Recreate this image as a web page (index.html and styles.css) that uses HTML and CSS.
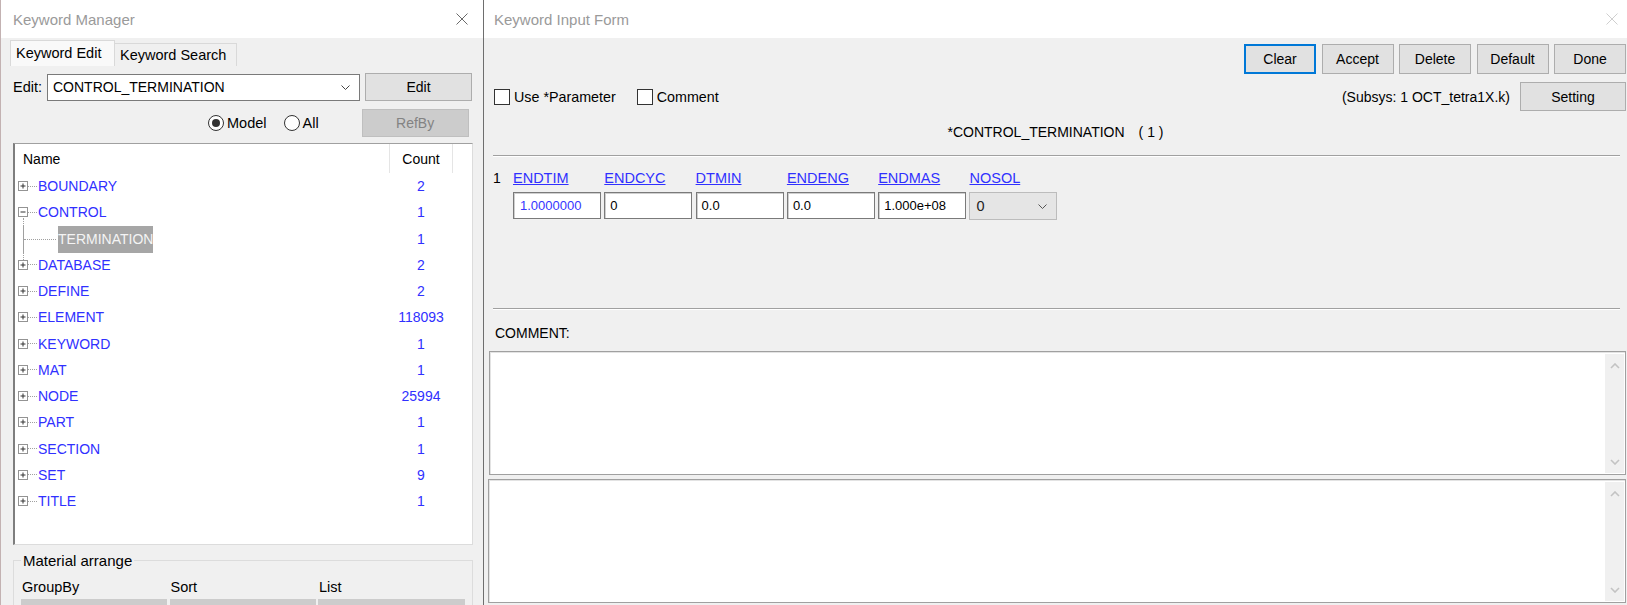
FILE: index.html
```html
<!DOCTYPE html>
<html>
<head>
<meta charset="utf-8">
<title>Keyword Manager</title>
<link rel="stylesheet" href="styles.css">
</head>
<body>
<div class="screen">
  <section class="win win-left">
    <header class="titlebar">
      <span class="title">Keyword Manager</span>
      <svg class="close dark" width="12" height="12" viewBox="0 0 12 12"><path d="M0.5 0.5L11.5 11.5M11.5 0.5L0.5 11.5"/></svg>
    </header>
    <div class="win-body">
      <div class="tabs">
        <div class="tab active">Keyword Edit</div>
        <div class="tab">Keyword Search</div>
      </div>
      <div class="edit-row">
        <span class="edit-lbl">Edit:</span>
        <div class="combo">
          <span class="combo-text">CONTROL_TERMINATION</span>
          <svg class="chev" width="9" height="5" viewBox="0 0 9 5"><path d="M0.5 0.5L4.5 4.5L8.5 0.5"/></svg>
        </div>
        <button class="btn btn-side">Edit</button>
      </div>
      <div class="radio-row">
        <span class="radio checked"></span><span class="radio-lbl">Model</span>
        <span class="radio radio-all"></span><span class="radio-lbl">All</span>
        <button class="btn btn-side disabled">RefBy</button>
      </div>
      <div class="listbox">
        <div class="list-head">
          <div class="head-name">Name</div>
          <div class="head-count">Count</div>
          <div class="head-rest"></div>
        </div>
        <div class="tree">
          <div class="row"><div class="cell-name"><svg class="tog" width="10" height="10" viewBox="0 0 10 10"><rect x="0.5" y="0.5" width="9" height="9"/><path d="M2.5 5H7.5M5 2.5V7.5"/></svg><span class="dots"></span><span class="nm">BOUNDARY</span></div><div class="cnt">2</div></div>
          <div class="row"><div class="cell-name"><svg class="tog" width="10" height="10" viewBox="0 0 10 10"><rect x="0.5" y="0.5" width="9" height="9"/><path d="M2.5 5H7.5"/></svg><span class="dots"></span><span class="nm">CONTROL</span></div><div class="cnt">1</div></div>
          <div class="row child"><div class="cell-name"><span class="branch"></span><span class="nm sel">TERMINATION</span></div><div class="cnt">1</div></div>
          <div class="row"><div class="cell-name"><svg class="tog" width="10" height="10" viewBox="0 0 10 10"><rect x="0.5" y="0.5" width="9" height="9"/><path d="M2.5 5H7.5M5 2.5V7.5"/></svg><span class="dots"></span><span class="nm">DATABASE</span></div><div class="cnt">2</div></div>
          <div class="row"><div class="cell-name"><svg class="tog" width="10" height="10" viewBox="0 0 10 10"><rect x="0.5" y="0.5" width="9" height="9"/><path d="M2.5 5H7.5M5 2.5V7.5"/></svg><span class="dots"></span><span class="nm">DEFINE</span></div><div class="cnt">2</div></div>
          <div class="row"><div class="cell-name"><svg class="tog" width="10" height="10" viewBox="0 0 10 10"><rect x="0.5" y="0.5" width="9" height="9"/><path d="M2.5 5H7.5M5 2.5V7.5"/></svg><span class="dots"></span><span class="nm">ELEMENT</span></div><div class="cnt">118093</div></div>
          <div class="row"><div class="cell-name"><svg class="tog" width="10" height="10" viewBox="0 0 10 10"><rect x="0.5" y="0.5" width="9" height="9"/><path d="M2.5 5H7.5M5 2.5V7.5"/></svg><span class="dots"></span><span class="nm">KEYWORD</span></div><div class="cnt">1</div></div>
          <div class="row"><div class="cell-name"><svg class="tog" width="10" height="10" viewBox="0 0 10 10"><rect x="0.5" y="0.5" width="9" height="9"/><path d="M2.5 5H7.5M5 2.5V7.5"/></svg><span class="dots"></span><span class="nm">MAT</span></div><div class="cnt">1</div></div>
          <div class="row"><div class="cell-name"><svg class="tog" width="10" height="10" viewBox="0 0 10 10"><rect x="0.5" y="0.5" width="9" height="9"/><path d="M2.5 5H7.5M5 2.5V7.5"/></svg><span class="dots"></span><span class="nm">NODE</span></div><div class="cnt">25994</div></div>
          <div class="row"><div class="cell-name"><svg class="tog" width="10" height="10" viewBox="0 0 10 10"><rect x="0.5" y="0.5" width="9" height="9"/><path d="M2.5 5H7.5M5 2.5V7.5"/></svg><span class="dots"></span><span class="nm">PART</span></div><div class="cnt">1</div></div>
          <div class="row"><div class="cell-name"><svg class="tog" width="10" height="10" viewBox="0 0 10 10"><rect x="0.5" y="0.5" width="9" height="9"/><path d="M2.5 5H7.5M5 2.5V7.5"/></svg><span class="dots"></span><span class="nm">SECTION</span></div><div class="cnt">1</div></div>
          <div class="row"><div class="cell-name"><svg class="tog" width="10" height="10" viewBox="0 0 10 10"><rect x="0.5" y="0.5" width="9" height="9"/><path d="M2.5 5H7.5M5 2.5V7.5"/></svg><span class="dots"></span><span class="nm">SET</span></div><div class="cnt">9</div></div>
          <div class="row"><div class="cell-name"><svg class="tog" width="10" height="10" viewBox="0 0 10 10"><rect x="0.5" y="0.5" width="9" height="9"/><path d="M2.5 5H7.5M5 2.5V7.5"/></svg><span class="dots"></span><span class="nm">TITLE</span></div><div class="cnt">1</div></div>
        </div>
      </div>
      <fieldset class="group">
        <legend>Material arrange</legend>
        <div class="group-grid">
          <span class="g-lbl">GroupBy</span><span class="g-lbl">Sort</span><span class="g-lbl">List</span>
          <div class="g-block"></div><div class="g-block"></div><div class="g-block"></div>
        </div>
      </fieldset>
    </div>
  </section>

  <section class="win win-right">
    <header class="titlebar titlebar-right">
      <span class="title">Keyword Input Form</span>
      <svg class="close light" width="12" height="12" viewBox="0 0 12 12"><path d="M0.5 0.5L11.5 11.5M11.5 0.5L0.5 11.5"/></svg>
    </header>
    <div class="form-body">
      <div class="btn-row">
        <button class="btn btn-act focus">Clear</button>
        <button class="btn btn-act">Accept</button>
        <button class="btn btn-act">Delete</button>
        <button class="btn btn-act">Default</button>
        <button class="btn btn-act">Done</button>
      </div>
      <div class="opt-row">
        <span class="check"></span><span class="check-lbl">Use *Parameter</span>
        <span class="check"></span><span class="check-lbl">Comment</span>
        <span class="subsys">(Subsys: 1 OCT_tetra1X.k)</span>
        <button class="btn btn-setting">Setting</button>
      </div>
      <div class="kw-title">*CONTROL_TERMINATION<span class="kw-count">( 1 )</span></div>
      <div class="sep"></div>
      <div class="fields">
        <span class="rownum">1</span>
        <span class="flabel">ENDTIM</span>
        <span class="flabel">ENDCYC</span>
        <span class="flabel">DTMIN</span>
        <span class="flabel">ENDENG</span>
        <span class="flabel">ENDMAS</span>
        <span class="flabel">NOSOL</span>
        <div class="finput blue">1.0000000</div>
        <div class="finput">0</div>
        <div class="finput">0.0</div>
        <div class="finput">0.0</div>
        <div class="finput">1.000e+08</div>
        <div class="fselect"><span>0</span><svg class="chev" width="9" height="5" viewBox="0 0 9 5"><path d="M0.5 0.5L4.5 4.5L8.5 0.5"/></svg></div>
      </div>
      <div class="sep sep2"></div>
      <div class="comment-lbl">COMMENT:</div>
      <div class="tarea">
        <div class="tarea-text"></div>
        <div class="vscroll">
          <svg width="10" height="6" viewBox="0 0 10 6"><path d="M1 5L5 1L9 5"/></svg>
          <svg width="10" height="6" viewBox="0 0 10 6"><path d="M1 1L5 5L9 1"/></svg>
        </div>
      </div>
      <div class="tarea tarea2">
        <div class="tarea-text"></div>
        <div class="vscroll">
          <svg width="10" height="6" viewBox="0 0 10 6"><path d="M1 5L5 1L9 5"/></svg>
          <svg width="10" height="6" viewBox="0 0 10 6"><path d="M1 1L5 5L9 1"/></svg>
        </div>
      </div>
    </div>
  </section>
</div>
</body>
</html>
```

FILE: styles.css
```css
* { box-sizing: border-box; }
html, body { margin: 0; padding: 0; }
body {
  background: #f0f0f0;
  font-family: "Liberation Sans", Arial, sans-serif;
  font-size: 14px;
  color: #000;
}
.screen {
  display: flex;
  width: 1627px;
  height: 605px;
  overflow: hidden;
}
.win {
  display: flex;
  flex-direction: column;
  background: #f0f0f0;
  overflow: hidden;
}
.win-left {
  width: 483px;
  flex: none;
  border-left: 1px solid #c3b2b2;
}
.win-right {
  flex: 1;
  border-left: 1px solid #6e6e6e;
}
.titlebar {
  height: 38px;
  flex: none;
  background: #fff;
  display: flex;
  align-items: center;
  justify-content: space-between;
  padding: 0 15px 0 12px;
  font-size: 15px;
  color: #9a9a9a;
}
.titlebar-right { padding: 0 9px 0 10px; }
.close path { fill: none; stroke-width: 1; }
.close.dark path { stroke: #6a6a6a; }
.close.light path { stroke: #cfcfcf; }

.win-body { flex: 1; display: flex; flex-direction: column; }

/* tabs */
.tabs {
  margin-top: 2px;
  padding-left: 9px;
  height: 26px;
  display: flex;
  align-items: flex-end;
}
.tab {
  height: 23px;
  padding: 0 5px;
  display: flex;
  align-items: center;
  background: #f0f0f0;
  border: 1px solid #d9d9d9;
  border-bottom: none;
  font-size: 14.5px;
}
.tab.active {
  height: 26px;
  width: 105px;
  background: #f9f9f9;
  padding-bottom: 2px;
}
.tab + .tab { margin-left: -1px; width: 123px; }

/* edit row */
.edit-row {
  margin-top: 7px;
  height: 28px;
  display: flex;
  align-items: center;
  padding-left: 12px;
}
.edit-lbl { width: 34px; font-size: 14.5px; }
.combo {
  width: 313px;
  height: 27px;
  background: #fff;
  border: 1px solid #7a7a7a;
  display: flex;
  align-items: center;
  justify-content: space-between;
  padding: 0 9px 0 5px;
  margin-right: 5px;
}
.chev path { fill: none; stroke: #444; stroke-width: 1; }
.btn {
  font-family: inherit;
  font-size: 14px;
  background: #e1e1e1;
  border: 1px solid #adadad;
  color: #000;
  padding: 0;
  margin: 0;
}
.btn-side { width: 107px; height: 28px; }
.btn.disabled { background: #cccccc; border-color: #bfbfbf; color: #838383; }

/* radio row */
.radio-row {
  margin-top: 8px;
  height: 28px;
  display: flex;
  align-items: center;
  padding-left: 207px;
}
.radio {
  width: 16px;
  height: 16px;
  border: 1px solid #333;
  border-radius: 50%;
  background: #fff;
  display: flex;
  align-items: center;
  justify-content: center;
}
.radio.checked::after {
  content: "";
  width: 8px;
  height: 8px;
  border-radius: 50%;
  background: #333;
}
.radio-lbl { margin-left: 3px; font-size: 14.5px; }
.radio-all { margin-left: 17px; }
.radio-row .btn { margin-left: 43px; }

/* list box */
.listbox {
  margin: 6px 0 0 12px;
  width: 460px;
  height: 402px;
  flex: none;
  background: #fff;
  border-left: 2px solid #7e7e7e;
  border-top: 1px solid #a0a0a0;
  border-right: 1px solid #dcdcdc;
  border-bottom: 1px solid #dcdcdc;
  overflow: hidden;
}
.list-head {
  height: 29px;
  display: grid;
  grid-template-columns: 374px 64px 1fr;
}
.head-name { padding-left: 8px; display: flex; align-items: center; }
.head-count {
  border-left: 1px solid #e5e5e5;
  border-right: 1px solid #e5e5e5;
  display: flex;
  align-items: center;
  justify-content: center;
}
.tree { display: flex; flex-direction: column; }
.row {
  height: 26.25px;
  display: grid;
  grid-template-columns: 374px 64px 1fr;
  align-items: center;
  color: #3030ff;
}
.cell-name {
  display: flex;
  align-items: center;
  height: 100%;
  padding-left: 3px;
}
.tog rect { fill: #fff; stroke: #939393; }
.tog path { stroke: #333; stroke-width: 1; fill: none; }
.dots {
  width: 9px;
  height: 0;
  border-top: 1px dotted #a0a0a0;
  margin-right: 1px;
}
.cnt { text-align: center; }
.row.child .cell-name { padding-left: 8px; }
.branch {
  position: relative;
  width: 35px;
  height: 100%;
  border-left: 1px dotted #a0a0a0;
  display: flex;
  align-items: center;
}
.branch::before {
  content: "";
  position: absolute;
  left: -1px;
  top: -8px;
  bottom: -7px;
  border-left: 1px dotted #a0a0a0;
}
.branch::after {
  content: "";
  width: 32px;
  border-top: 1px dotted #a0a0a0;
}
.nm.sel {
  background: #a6a6a6;
  color: #f4f4f4;
  height: 27px;
  display: flex;
  align-items: center;
}

/* group */
.group {
  margin: 6.5px 0 0 12px;
  width: 460px;
  border: 1px solid #dcdcdc;
  padding: 0 0 0 7px;
  min-width: 0;
}
.group legend {
  padding: 0 2px;
  font-size: 15px;
  line-height: 17px;
}
.group-grid {
  margin-top: 10px;
  display: grid;
  grid-template-columns: 146px 146px 147px;
  column-gap: 2.5px;
  row-gap: 3.5px;
}
.g-lbl { padding-left: 1px; line-height: 17px; font-size: 14.5px; }
.g-block { height: 30px; background: #cccccc; }

/* right form */
.form-body { flex: 1; display: flex; flex-direction: column; }
.btn-row {
  margin-top: 6px;
  height: 30px;
  display: flex;
  justify-content: flex-end;
  gap: 5.5px;
  padding-right: 1px;
}
.btn-act { width: 72px; height: 30px; }
.btn.focus { border: 2px solid #0078d7; }
.opt-row {
  margin-top: 8px;
  height: 29px;
  display: flex;
  align-items: center;
  padding: 0 1px 0 10px;
}
.check {
  width: 16px;
  height: 16px;
  border: 1px solid #333;
  background: #fff;
}
.check-lbl { margin-left: 4px; margin-right: 21px; font-size: 14.3px; }
.subsys { margin-left: auto; margin-right: 10px; }
.btn-setting { width: 106px; height: 29px; }
.kw-title {
  margin-top: 11px;
  height: 20px;
  line-height: 20px;
  text-align: center;
}
.kw-count { margin-left: 14px; }
.sep {
  margin: 13px 7px 0 9px;
  height: 2px;
  border-top: 1px solid #a0a0a0;
  border-bottom: 1px solid #fff;
}
.fields {
  margin: 12px 0 0 9px;
  display: grid;
  grid-template-columns: 16.7px repeat(6, 88px);
  grid-template-rows: 18px 27px;
  column-gap: 3.3px;
  row-gap: 5px;
}
.rownum { grid-row: 1 / span 2; grid-column: 1; line-height: 18px; align-self: start; }
.flabel {
  color: #3030ff;
  text-decoration: underline;
  line-height: 18px;
  font-size: 14.5px;
}
.finput {
  background: #fff;
  border: 1px solid #7a7a7a;
  box-shadow: inset 1px 1px 0 #cfcfcf;
  font-size: 13px;
  padding-left: 5px;
  display: flex;
  align-items: center;
}
.finput.blue { color: #3535ff; padding-left: 6px; }
.fselect {
  height: 28px;
  background: #e5e5e5;
  border: 1px solid #bcbcbc;
  display: flex;
  align-items: center;
  justify-content: space-between;
  padding: 0 9px 0 6px;
  font-size: 14.5px;
  color: #222;
}
.fselect .chev path { stroke: #555; }
.sep2 { margin-top: 89px; }
.comment-lbl {
  margin: 14px 0 0 11px;
  height: 18px;
  line-height: 18px;
}
.tarea {
  margin: 9px 1px 0 5px;
  height: 124px;
  flex: none;
  display: flex;
  background: #fff;
  border: 1px solid #a0a0a0;
  box-shadow: inset 1px 1px 0 #e3e3e3;
}
.tarea2 { margin-top: 4px; margin-left: 4px; }
.tarea-text { flex: 1; }
.vscroll {
  width: 19px;
  margin: 2px 1px 1px 0;
  background: #f0f0f0;
  display: flex;
  flex-direction: column;
  align-items: center;
  justify-content: space-between;
  padding: 9px 0 8px;
}
.vscroll path { fill: none; stroke: #c3c3c3; stroke-width: 1.6; }
```
